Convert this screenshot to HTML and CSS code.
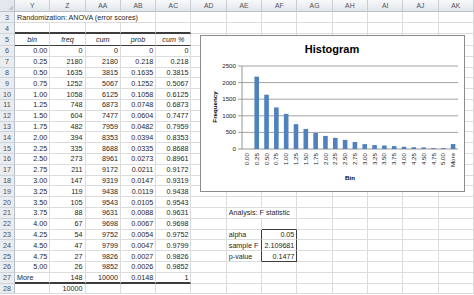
FILE: index.html
```html
<!DOCTYPE html>
<html lang="en">
<head>
    <meta charset="UTF-8">
    <meta name="viewport" content="width=device-width, initial-scale=1.0">
    <title>Randomization: ANOVA</title>
    <link rel="stylesheet" href="styles.css">
</head>
<body>
    <div class="workbook">
        <div class="sheet" id="sheet"></div>

        <div class="chart">
            <svg id="chart" width="265" height="157" viewBox="0 0 265 157"></svg>
        </div>
    </div>

    <script>
        const columns = ['Y', 'Z', 'AA', 'AB', 'AC', 'AD', 'AE', 'AF', 'AG', 'AH', 'AI', 'AJ', 'AK'];

        const bins = [
            ['0.00', 0, 0, '0', '0'],
            ['0.25', 2180, 2180, '0.218', '0.218'],
            ['0.50', 1635, 3815, '0.1635', '0.3815'],
            ['0.75', 1252, 5067, '0.1252', '0.5067'],
            ['1.00', 1058, 6125, '0.1058', '0.6125'],
            ['1.25', 748, 6873, '0.0748', '0.6873'],
            ['1.50', 604, 7477, '0.0604', '0.7477'],
            ['1.75', 482, 7959, '0.0482', '0.7959'],
            ['2.00', 394, 8353, '0.0394', '0.8353'],
            ['2.25', 335, 8688, '0.0335', '0.8688'],
            ['2.50', 273, 8961, '0.0273', '0.8961'],
            ['2.75', 211, 9172, '0.0211', '0.9172'],
            ['3.00', 147, 9319, '0.0147', '0.9319'],
            ['3.25', 119, 9438, '0.0119', '0.9438'],
            ['3.50', 105, 9543, '0.0105', '0.9543'],
            ['3.75', 88, 9631, '0.0088', '0.9631'],
            ['4.00', 67, 9698, '0.0067', '0.9698'],
            ['4.25', 54, 9752, '0.0054', '0.9752'],
            ['4.50', 47, 9799, '0.0047', '0.9799'],
            ['4.75', 27, 9826, '0.0027', '0.9826'],
            ['5.00', 26, 9852, '0.0026', '0.9852'],
            ['More', 148, 10000, '0.0148', '1']
        ];

        const analysis = {
            21: ['Analysis: F statistic'],
            23: ['alpha', '0.05'],
            24: ['sample F', '2.109681'],
            25: ['p-value', '0.1477']
        };

        // Build the cells of one row: returns list of {text, cls, span}
        function rowCells(row) {
            const cells = columns.map(() => ({ text: '', cls: '' }));

            if (row === 3) {
                cells[0] = { text: 'Randomization: ANOVA (error scores)', cls: 'txt', span: 4 };
                cells.splice(1, 3);
                return cells;
            }
            if (row === 4) {
                for (let i = 0; i < 5; i++) cells[i].cls = 'rule-thick';
            }
            if (row === 5) {
                ['bin', 'freq', 'cum', 'prob', 'cum %'].forEach((h, i) => {
                    cells[i] = { text: h, cls: 'head rule-thin' };
                });
            }
            if (row >= 6 && row <= 27) {
                const b = bins[row - 6];
                const more = b[0] === 'More';
                cells[0] = { text: b[0], cls: more ? 'txt' : 'num' };
                for (let i = 1; i < 5; i++) cells[i] = { text: b[i], cls: 'num' };
                if (row === 27) cells.slice(0, 5).forEach(c => c.cls += ' rule-thick');
            }
            if (row === 28) {
                cells[1] = { text: '10000', cls: 'num' };
            }

            // analysis block in AE/AF
            if (row === 21) {
                cells[6] = { text: analysis[21][0], cls: 'txt', span: 2 };
                cells.splice(7, 1);
                return cells;
            }
            if (row === 22) cells[7].cls = 'box-top';
            if (analysis[row]) {
                cells[6] = { text: analysis[row][0], cls: 'txt box-left' };
                cells[7] = { text: analysis[row][1], cls: 'num box-right' + (row === 25 ? ' box-bottom' : '') };
            }
            return cells;
        }

        function buildSheet() {
            const sheet = document.getElementById('sheet');
            let html = '<div class="corner"></div>';
            html += columns.map(c => `<div class="col-head">${c}</div>`).join('');

            for (let row = 3; row <= 28; row++) {
                html += `<div class="row-head">${row}</div>`;
                rowCells(row).forEach(c => {
                    const span = c.span ? ` span-${c.span}` : '';
                    html += `<div class="cell ${c.cls}${span}">${c.text}</div>`;
                });
            }
            sheet.innerHTML = html;
        }

        // Histogram of freq column
        function buildChart() {
            const svg = document.getElementById('chart');
            const left = 42, right = 258, top = 31, base = 114;
            const scale = (base - top) / 2500;
            const step = (right - left) / bins.length;
            let out = '<rect class="chart-frame" x="0.5" y="0.5" width="264" height="156"></rect>';
            out += '<text class="chart-title" x="132" y="18" text-anchor="middle">Histogram</text>';

            for (let v = 0; v <= 2500; v += 500) {
                const y = base - v * scale;
                out += `<line class="${v ? 'grid' : 'axis'}" x1="38" y1="${y}" x2="${right}" y2="${y}"></line>`;
                out += `<text class="tick" x="36" y="${y + 2}" text-anchor="end">${v}</text>`;
            }
            out += `<line class="axis" x1="${left}" y1="${top}" x2="${left}" y2="${base}"></line>`;

            bins.forEach((b, i) => {
                const cx = left + (i + 0.5) * step;
                const h = b[1] * scale;
                out += `<rect class="bar" x="${cx - 2.3}" y="${base - h}" width="4.6" height="${h}"></rect>`;
                out += `<text class="tick" transform="translate(${cx + 2.1} 118) rotate(-90)" text-anchor="end">${b[0]}</text>`;
            });

            out += '<text class="axis-title" x="150" y="145" text-anchor="middle">Bin</text>';
            out += '<text class="axis-title" transform="translate(17 72) rotate(-90)" text-anchor="middle">Frequency</text>';
            svg.innerHTML = out;
        }

        document.addEventListener('DOMContentLoaded', () => {
            buildSheet();
            buildChart();
        });
    </script>
</body>
</html>
```

FILE: styles.css
```css
* {
    margin: 0;
    padding: 0;
    box-sizing: border-box;
    font-family: 'Liberation Sans', Arial, sans-serif;
}

body {
    background: #ffffff;
    width: 474px;
    height: 295px;
    overflow: hidden;
}

.workbook {
    position: relative;
}

.sheet {
    display: grid;
    grid-template-columns: 15px repeat(13, 35.3px);
    grid-template-rows: 12px 11px 11px 12px repeat(23, 10.8px);
    font-size: 7.2px;
    color: #1e1e1e;
}

.corner {
    background: #e4e8ed;
    border-right: 1px solid #b9c0c8;
    border-bottom: 1px solid #b9c0c8;
    position: relative;
}

.corner::after {
    content: '';
    position: absolute;
    right: 1px;
    bottom: 1px;
    border-left: 5px solid transparent;
    border-bottom: 5px solid #c2c7cd;
}

.col-head {
    background: linear-gradient(#f7f8fa, #e2e6eb);
    border-right: 1px solid #c8cdd3;
    border-bottom: 1px solid #b9c0c8;
    color: #4d5259;
    font-size: 6.8px;
    display: flex;
    align-items: center;
    justify-content: center;
}

.row-head {
    background: #e9ecf0;
    border-right: 1px solid #b9c0c8;
    border-bottom: 1px solid #cfd4da;
    color: #4d5259;
    font-size: 7.2px;
    display: flex;
    align-items: center;
    justify-content: center;
}

.cell {
    border-right: 1px solid #dcdcdc;
    border-bottom: 1px solid #dcdcdc;
    padding: 0 2px;
    display: flex;
    align-items: center;
    white-space: nowrap;
}

.span-2 {
    grid-column: span 2;
}

.span-4 {
    grid-column: span 4;
}

.num {
    justify-content: flex-end;
}

.txt {
    justify-content: flex-start;
}

.head {
    justify-content: center;
    font-style: italic;
}

.rule-thick {
    border-bottom: 2px solid #3c3c3c;
}

.rule-thin {
    border-bottom: 1px solid #3c3c3c;
}

.box-top {
    border-bottom: 1px solid #3c3c3c;
}

.box-left {
    border-right: 1px solid #3c3c3c;
}

.box-right {
    border-right: 1px solid #3c3c3c;
}

.box-bottom {
    border-bottom: 1px solid #3c3c3c;
}

/* chart floats over the cells */
.chart {
    position: absolute;
    left: 200px;
    top: 35px;
    width: 265px;
    height: 157px;
}

.chart svg {
    display: block;
}

.chart-frame {
    fill: #ffffff;
    stroke: #8c8c8c;
    stroke-width: 1;
}

.chart-title {
    font-size: 11px;
    font-weight: bold;
    fill: #000000;
}

.grid {
    stroke: #8a8a8a;
    stroke-width: 0.8;
}

.axis {
    stroke: #8a8a8a;
    stroke-width: 0.9;
}

.bar {
    fill: #4f81bd;
}

.tick {
    font-size: 6.2px;
    fill: #1e1e1e;
}

.axis-title {
    font-size: 6.2px;
    font-weight: bold;
    fill: #000000;
}
```
